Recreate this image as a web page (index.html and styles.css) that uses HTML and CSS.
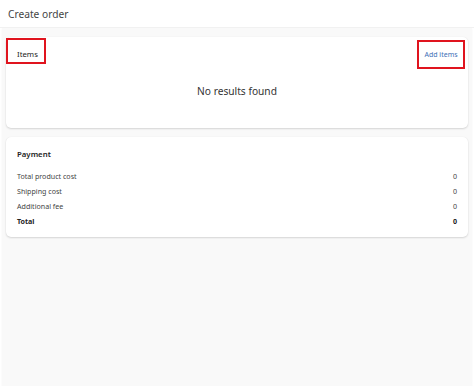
FILE: index.html
```html
<!DOCTYPE html>
<html>
<head>
<meta charset="utf-8">
<link rel="stylesheet" href="styles.css">
</head>
<body>
<header class="topbar">Create order</header>
<main class="content">
  <section class="card items-card">
    <div class="card-head">
      <div class="title-box">Items</div>
      <a class="add-box" href="#">Add items</a>
    </div>
    <div class="empty">No results found</div>
  </section>
  <section class="card pay-card">
    <div class="pay-title">Payment</div>
    <div class="row"><span>Total product cost</span><span>0</span></div>
    <div class="row"><span>Shipping cost</span><span>0</span></div>
    <div class="row"><span>Additional fee</span><span>0</span></div>
    <div class="row total"><span>Total</span><span>0</span></div>
  </section>
</main>
</body>
</html>
```
FILE: styles.css
```css
html, body {
  margin: 0;
  padding: 0;
  background: #ffffff;
  font-family: "Noto Sans", "Open Sans", Arial, sans-serif;
  color: #333;
}
.topbar {
  height: 28px;
  box-sizing: border-box;
  padding: 7px 8px 0;
  font-size: 10.2px;
  line-height: 14px;
  color: #444;
  border-bottom: 1px solid #f1f1f1;
}
.content {
  margin: 0 2px;
  background: #f9f9f9;
  height: 358px;
  box-sizing: border-box;
  padding: 9px 4px;
  display: flex;
  flex-direction: column;
  gap: 9px;
  box-shadow: 0 1px 2px rgba(0,0,0,0.04);
}
.card {
  background: #fff;
  border-radius: 5px;
  box-shadow: 0 1px 2px rgba(0,0,0,0.14), 0 0 1px rgba(0,0,0,0.08);
}
.items-card {
  height: 91px;
  box-sizing: border-box;
}
.card-head {
  display: flex;
  justify-content: space-between;
  align-items: flex-start;
}
.title-box {
  margin-top: 1px;
  width: 40px;
  height: 26px;
  box-sizing: border-box;
  border: 2px solid #e0141e;
  padding: 6px 0 0 9px;
  font-size: 7.8px;
  line-height: 16px;
  color: #222;
}
.add-box {
  margin-top: 3px;
  margin-right: 3px;
  width: 48px;
  height: 29px;
  box-sizing: border-box;
  border: 2px solid #e0141e;
  display: flex;
  align-items: center;
  justify-content: center;
  font-size: 7px;
  color: #3d6fb6;
  text-decoration: none;
}
.empty {
  margin-top: 14px;
  text-align: center;
  font-size: 10.2px;
  line-height: 16px;
  color: #333;
}
.pay-card {
  padding: 11px 11px 8px;
  height: 100px;
  box-sizing: border-box;
}
.pay-title {
  font-size: 7.8px;
  line-height: 12px;
  font-weight: 600;
  color: #222;
  margin-bottom: 9px;
}
.row {
  display: flex;
  justify-content: space-between;
  font-size: 7.1px;
  line-height: 15px;
  color: #444;
}
.row.total {
  font-weight: 700;
  color: #222;
}
```
